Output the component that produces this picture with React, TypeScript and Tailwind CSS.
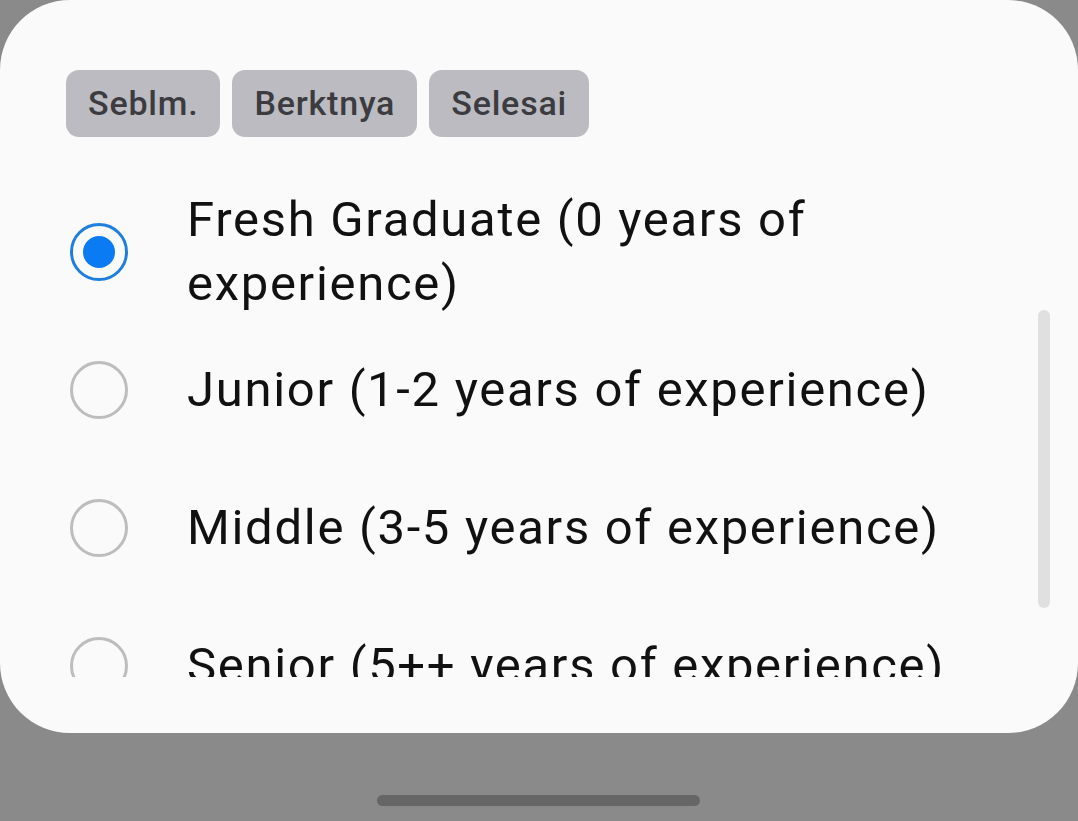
import React from "react";

const options = [
  "Fresh Graduate (0 years of experience)",
  "Junior (1-2 years of experience)",
  "Middle (3-5 years of experience)",
  "Senior (5++ years of experience)",
];

const Radio = ({ checked }: { checked: boolean }) =>
  checked ? (
    <span className="flex h-[58px] w-[58px] shrink-0 items-center justify-center rounded-full border-[3px] border-[#1e7fdc]">
      <span className="h-[32px] w-[32px] rounded-full bg-[#0b7bf4]" />
    </span>
  ) : (
    <span className="h-[58px] w-[58px] shrink-0 rounded-full border-[3px] border-[#bdbdbd]" />
  );

export default function App() {
  const buttons = ["Seblm.", "Berktnya", "Selesai"];
  return (
    <div
      className="h-[821px] w-[1078px] overflow-hidden bg-[#8a8a8a]"
      style={{ fontFamily: "Roboto, 'Noto Sans', sans-serif" }}
    >
      <div className="relative h-[733px] w-full rounded-[70px] bg-[#fafafa] pt-[70px]">
        <div className="flex gap-[12px] pl-[66px]">
          {buttons.map((b) => (
            <button
              key={b}
              className="flex h-[67px] items-center rounded-[13px] bg-[#bbbbc1] px-[22px] text-[34px] font-medium tracking-[0.8px] text-[#3b3b40]"
            >
              {b}
            </button>
          ))}
        </div>

        <div className="mt-[46px] h-[494px] overflow-hidden">
          {options.map((o, i) => (
            <div key={o} className="flex h-[138px] items-center pl-[70px]">
              <Radio checked={i === 0} />
              <span className="ml-[59px] w-[800px] text-[49px] leading-[64px] tracking-[1.7px] text-[#111]">
                {o}
              </span>
            </div>
          ))}
        </div>

        <div className="absolute left-[1038px] top-[310px] h-[298px] w-[12px] rounded-full bg-[#e0e0e0]" />
      </div>

      <div className="mt-[62px] flex justify-center">
        <div className="ml-[-1px] h-[11px] w-[323px] rounded-full bg-[#666666]" />
      </div>
    </div>
  );
}
